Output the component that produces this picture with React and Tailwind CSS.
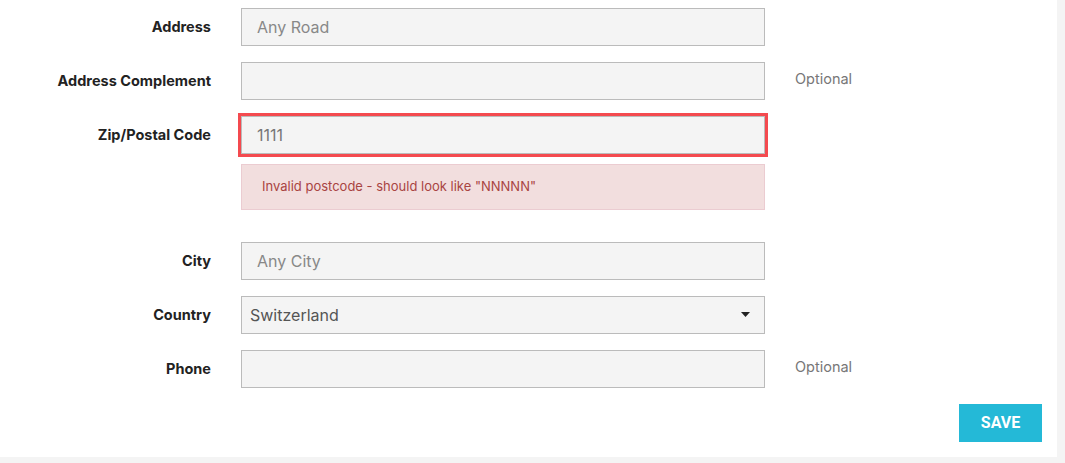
import React, { useState } from 'react';

const Field = ({ label, children, optional }) => (
  <div className="flex items-center gap-[30px]">
    <label className="w-[211px] text-right text-[14.5px] font-bold text-[#222]">{label}</label>
    <div className="w-[524px]">{children}</div>
    {optional && <span className="mb-[4px] text-[14.5px] text-[#777]">Optional</span>}
  </div>
);

const inputCls =
  'box-border h-[38px] w-full border border-[#bbbbbb] bg-[#f4f4f4] px-[15px] text-[16px] text-[#777] placeholder:text-[#888] outline-none';

const App = () => {
  const [zip, setZip] = useState('1111');

  return (
    <div className="h-[463px] w-full bg-[#f4f4f4] font-['Inter','Noto_Sans',sans-serif]">
      <div className="flex h-[457px] w-[1057px] flex-col bg-white pt-[8px]">
        <div className="flex flex-col gap-[16px]">
          <Field label="Address">
            <input className={inputCls} placeholder="Any Road" />
          </Field>
          <Field label="Address Complement" optional>
            <input className={inputCls} />
          </Field>
          <div className="flex flex-col gap-[10px]">
            <Field label="Zip/Postal Code">
              <input
                className={inputCls + ' shadow-[0_0_0_3px_#f44a4f]'}
                value={zip}
                onChange={(e) => setZip(e.target.value)}
              />
            </Field>
            <div className="flex gap-[30px]">
              <div className="w-[211px]" />
              <div className="box-border flex h-[46px] w-[524px] items-center border border-[#ebccd1] bg-[#f2dede] px-[20px] text-[13px] text-[#a94442]">
                Invalid postcode - should look like "NNNNN"
              </div>
            </div>
          </div>
          <div className="mt-[16px]">
            <Field label="City">
              <input className={inputCls} placeholder="Any City" />
            </Field>
          </div>
          <Field label="Country">
            <div className="relative">
              <select className="box-border h-[38px] w-full appearance-none border border-[#bbbbbb] bg-[#f4f4f4] px-[8px] text-[16px] text-[#555] outline-none" defaultValue="ch">
                <option value="ch">Switzerland</option>
              </select>
              <svg className="pointer-events-none absolute right-[15px] top-[16px]" width="9" height="5" viewBox="0 0 9 5">
                <path d="M0 0h9L4.5 5z" fill="#222" />
              </svg>
            </div>
          </Field>
          <Field label="Phone" optional>
            <input className={inputCls} />
          </Field>
        </div>
        <div className="mt-[16px] flex justify-end pr-[15px]">
          <button className="h-[38px] w-[83px] bg-[#24b9d7] font-['Roboto',sans-serif] text-[16px] font-bold text-white">
            SAVE
          </button>
        </div>
      </div>
    </div>
  );
};

export default App;
